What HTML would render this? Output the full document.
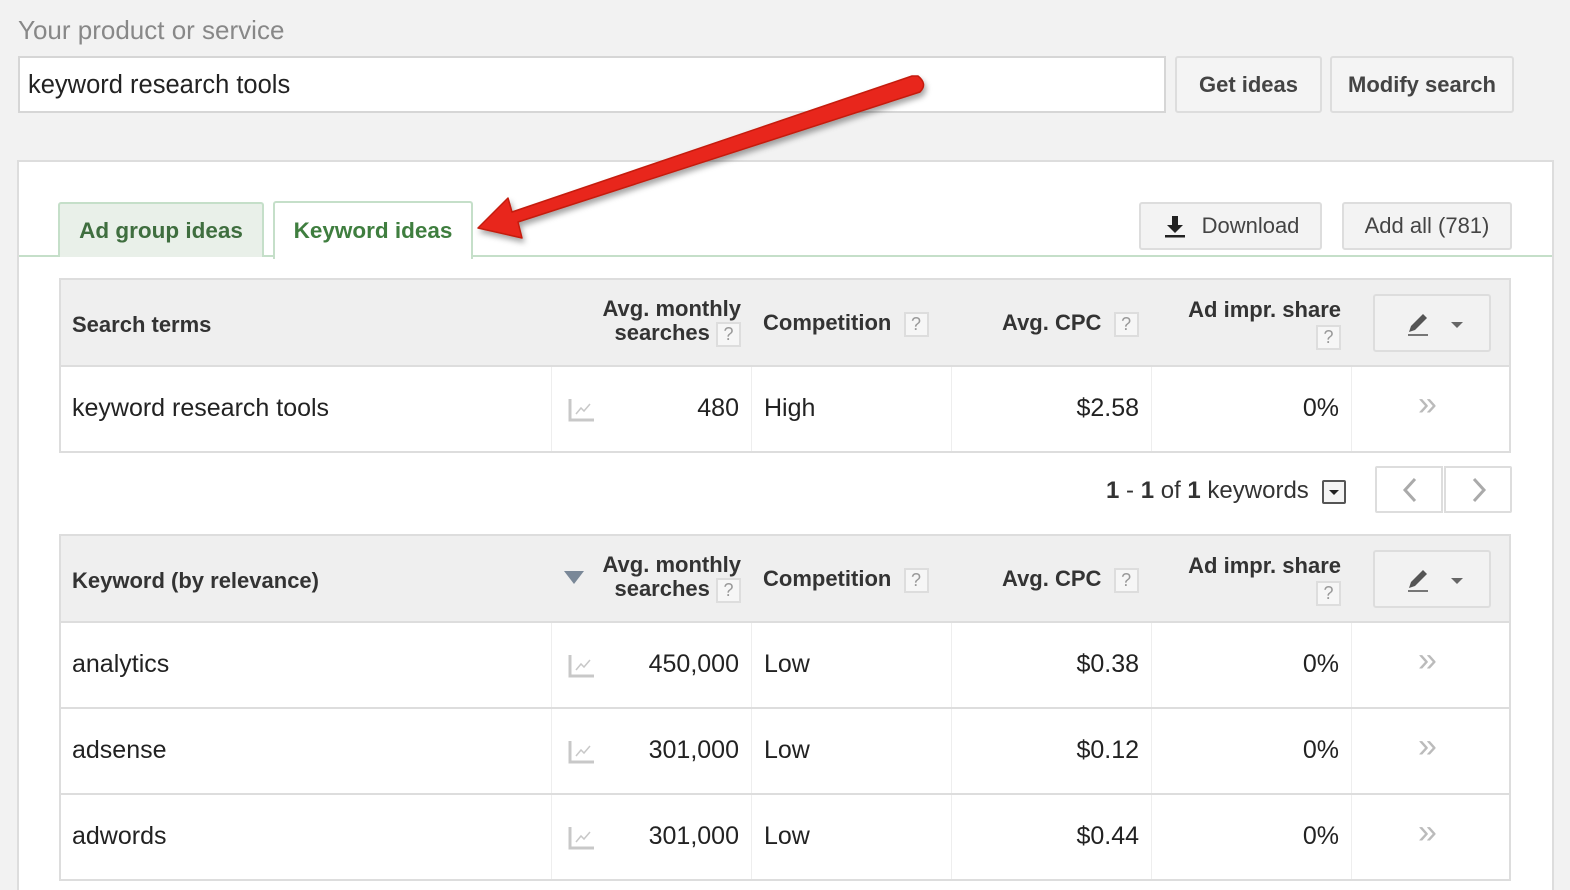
<!DOCTYPE html>
<html><head><meta charset="utf-8"><style>
*{box-sizing:border-box;margin:0;padding:0}
body{width:1570px;height:884px;overflow:hidden;background:#f2f2f2;font-family:"Liberation Sans",Arial,sans-serif;color:#222;position:relative}
.a{position:absolute}
.btn{position:absolute;border:2px solid #ddd;border-radius:3px;background:#f4f4f4;font-size:22px;color:#444;display:flex;align-items:center;justify-content:center}
.panel{position:absolute;left:17px;top:160px;width:1537px;height:730px;background:#fff;border-left:2px solid #ddd;border-top:2px solid #ddd;border-right:2px solid #ddd}
.tbl{position:absolute;left:59px;width:1452px;border:2px solid #ddd;border-bottom:none}
.hd{height:87px;background:#efefef;border-bottom:2px solid #ddd;position:relative;font-weight:bold;font-size:22px;color:#333}
.row{height:86px;border-bottom:2px solid #ddd;position:relative;font-size:25px;color:#222}
.row .c{position:absolute;top:0;bottom:0;border-left:1px solid #eee}
.q{display:inline-block;width:25px;height:25px;border:2px solid #ddd;background:#f6f6f6;color:#999;font-size:18px;font-weight:normal;text-align:center;line-height:21px;vertical-align:middle}
.t{position:absolute}
.r{text-align:right}
.edit{position:absolute;left:1312px;top:14px;width:118px;height:58px;border:2px solid #ddd;border-radius:3px;background:#f2f2f2}
.ch{position:absolute;left:66px;top:18px;color:#bbb;font-size:34px}
</style></head><body>
<div class="a" style="left:18px;top:15px;font-size:26px;color:#888">Your product or service</div>
<div class="a" style="left:18px;top:56px;width:1148px;height:57px;background:#fff;border:2px solid #d6d6d6;font-size:25.5px;padding:13px 0 0 8px;color:#222">keyword research tools</div>
<div class="btn" style="left:1175px;top:56px;width:147px;height:57px;font-weight:bold">Get ideas</div>
<div class="btn" style="left:1330px;top:56px;width:184px;height:57px;font-weight:bold">Modify search</div>
<div class="panel"></div>
<div class="a" style="left:19px;top:255px;width:1533px;height:2px;background:#c5dfc9"></div>
<div class="a" style="left:58px;top:202px;width:206px;height:55px;background:#e9f0e9;border:2px solid #c5dfc9;border-bottom:none;border-radius:3px 3px 0 0;color:#3f6e3f;font-weight:bold;font-size:22.5px;padding-top:14px;text-align:center">Ad group ideas</div>
<div class="a" style="left:273px;top:201px;width:200px;height:58px;background:#fff;border:2px solid #c5dfc9;border-bottom:none;border-radius:3px 3px 0 0;color:#3f7e3f;font-weight:bold;font-size:22.5px;padding-top:15px;text-align:center">Keyword ideas</div>
<div class="btn" style="left:1139px;top:202px;width:183px;height:48px;background:#f3f3f3"><svg width="26" height="26" viewBox="0 0 26 26" style="margin-right:14px"><path d="M10 3h6v9h5l-8 8-8-8h5z" fill="#222"/><rect x="3" y="22" width="20" height="2.5" fill="#222"/></svg>Download</div>
<div class="btn" style="left:1342px;top:202px;width:170px;height:48px;background:#f3f3f3">Add all (781)</div>

<div class="tbl" style="top:278px">
 <div class="hd">
  <div class="t" style="left:11px;top:32px">Search terms</div>
  <div class="t r" style="left:430px;top:17px;width:250px;line-height:24px">Avg. monthly<br>searches <span class="q">?</span></div>
  <div class="t" style="left:702px;top:30px">Competition &nbsp;<span class="q">?</span></div>
  <div class="t" style="left:941px;top:30px">Avg. CPC &nbsp;<span class="q">?</span></div>
  <div class="t r" style="left:1050px;top:17px;width:230px;line-height:26px">Ad impr. share<br><span class="q">?</span></div>
  <div class="edit"><svg class="a" style="left:30px;top:14px" width="60" height="28" viewBox="0 0 60 28"><path d="M4 22l2-6 12-12 4 4-12 12z" fill="#555"/><rect x="3" y="24" width="20" height="2" fill="#777"/><path d="M46 12h12l-6 6z" fill="#666"/></svg></div>
 </div>
 <div class="row">
  <div class="t" style="left:11px;top:27px">keyword research tools</div>
  <div class="c" style="left:490px;width:200px"><svg class="a" style="left:16px;top:30px" width="28" height="26"><path d="M2 2v21h24" stroke="#c8c8c8" stroke-width="3" fill="none"/><path d="M8 17l5-6 3 3 6-7" stroke="#c8c8c8" stroke-width="1.5" fill="none"/></svg><div class="t r" style="right:12px;top:27px">480</div></div>
  <div class="c" style="left:690px;width:200px"><div class="t" style="left:12px;top:27px">High</div></div>
  <div class="c" style="left:890px;width:200px"><div class="t" style="right:12px;top:27px">$2.58</div></div>
  <div class="c" style="left:1090px;width:200px"><div class="t" style="right:12px;top:27px">0%</div></div>
  <div class="c" style="left:1290px;width:160px"><div class="ch">»</div></div>
 </div>
</div>

<div class="a" style="left:1106px;top:477px;font-size:24px;color:#333"><b>1</b> - <b>1</b> of <b>1</b> keywords</div>
<div class="a" style="left:1322px;top:480px;width:24px;height:24px;border:2px solid #555;border-radius:2px;background:#f4f4f4"><svg width="20" height="20"><path d="M5 8h10l-5 5z" fill="#222"/></svg></div>
<div class="a" style="left:1375px;top:466px;width:68px;height:47px;border:2px solid #ddd;border-radius:2px 0 0 2px"><svg class="a" style="left:20px;top:8px" width="26" height="28"><path d="M18 3l-10 11 10 11" stroke="#aaa" stroke-width="3" fill="none"/></svg></div>
<div class="a" style="left:1444px;top:466px;width:68px;height:47px;border:2px solid #ddd;border-radius:0 2px 2px 0"><svg class="a" style="left:20px;top:8px" width="26" height="28"><path d="M8 3l10 11-10 11" stroke="#aaa" stroke-width="3" fill="none"/></svg></div>

<div class="tbl" style="top:534px">
 <div class="hd">
  <div class="t" style="left:11px;top:32px">Keyword (by relevance)</div>
  <svg class="a" style="left:502px;top:34px" width="22" height="16"><path d="M1 1h20l-10 13z" fill="#7a8898"/></svg>
  <div class="t r" style="left:430px;top:17px;width:250px;line-height:24px">Avg. monthly<br>searches <span class="q">?</span></div>
  <div class="t" style="left:702px;top:30px">Competition &nbsp;<span class="q">?</span></div>
  <div class="t" style="left:941px;top:30px">Avg. CPC &nbsp;<span class="q">?</span></div>
  <div class="t r" style="left:1050px;top:17px;width:230px;line-height:26px">Ad impr. share<br><span class="q">?</span></div>
  <div class="edit"><svg class="a" style="left:30px;top:14px" width="60" height="28" viewBox="0 0 60 28"><path d="M4 22l2-6 12-12 4 4-12 12z" fill="#555"/><rect x="3" y="24" width="20" height="2" fill="#777"/><path d="M46 12h12l-6 6z" fill="#666"/></svg></div>
 </div>
 <div class="row">
  <div class="t" style="left:11px;top:27px">analytics</div>
  <div class="c" style="left:490px;width:200px"><svg class="a" style="left:16px;top:30px" width="28" height="26"><path d="M2 2v21h24" stroke="#c8c8c8" stroke-width="3" fill="none"/><path d="M8 17l5-6 3 3 6-7" stroke="#c8c8c8" stroke-width="1.5" fill="none"/></svg><div class="t r" style="right:12px;top:27px">450,000</div></div>
  <div class="c" style="left:690px;width:200px"><div class="t" style="left:12px;top:27px">Low</div></div>
  <div class="c" style="left:890px;width:200px"><div class="t" style="right:12px;top:27px">$0.38</div></div>
  <div class="c" style="left:1090px;width:200px"><div class="t" style="right:12px;top:27px">0%</div></div>
  <div class="c" style="left:1290px;width:160px"><div class="ch">»</div></div>
 </div>
 <div class="row">
  <div class="t" style="left:11px;top:27px">adsense</div>
  <div class="c" style="left:490px;width:200px"><svg class="a" style="left:16px;top:30px" width="28" height="26"><path d="M2 2v21h24" stroke="#c8c8c8" stroke-width="3" fill="none"/><path d="M8 17l5-6 3 3 6-7" stroke="#c8c8c8" stroke-width="1.5" fill="none"/></svg><div class="t r" style="right:12px;top:27px">301,000</div></div>
  <div class="c" style="left:690px;width:200px"><div class="t" style="left:12px;top:27px">Low</div></div>
  <div class="c" style="left:890px;width:200px"><div class="t" style="right:12px;top:27px">$0.12</div></div>
  <div class="c" style="left:1090px;width:200px"><div class="t" style="right:12px;top:27px">0%</div></div>
  <div class="c" style="left:1290px;width:160px"><div class="ch">»</div></div>
 </div>
 <div class="row">
  <div class="t" style="left:11px;top:27px">adwords</div>
  <div class="c" style="left:490px;width:200px"><svg class="a" style="left:16px;top:30px" width="28" height="26"><path d="M2 2v21h24" stroke="#c8c8c8" stroke-width="3" fill="none"/><path d="M8 17l5-6 3 3 6-7" stroke="#c8c8c8" stroke-width="1.5" fill="none"/></svg><div class="t r" style="right:12px;top:27px">301,000</div></div>
  <div class="c" style="left:690px;width:200px"><div class="t" style="left:12px;top:27px">Low</div></div>
  <div class="c" style="left:890px;width:200px"><div class="t" style="right:12px;top:27px">$0.44</div></div>
  <div class="c" style="left:1090px;width:200px"><div class="t" style="right:12px;top:27px">0%</div></div>
  <div class="c" style="left:1290px;width:160px"><div class="ch">»</div></div>
 </div>
</div>

<svg class="a" style="left:0;top:0" width="1570" height="884">
 <defs><filter id="sh" x="-10%" y="-10%" width="120%" height="130%"><feDropShadow dx="2" dy="4" stdDeviation="3" flood-color="#000" flood-opacity="0.35"/></filter></defs>
 <path d="M918 76 Q928 84 920 92 L518 222 L522 238 L478 228 L508 198 L512 212 L912 76 Z" fill="#e8261a" stroke="#c41c10" stroke-width="1.5" stroke-linejoin="round" filter="url(#sh)"/>
</svg>
</body></html>
